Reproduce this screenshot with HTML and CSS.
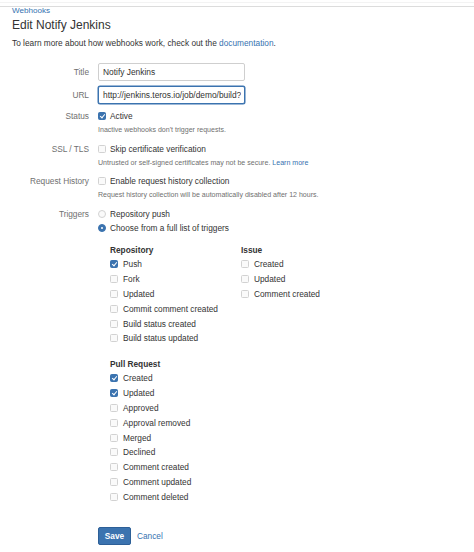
FILE: index.html
```html
<!DOCTYPE html>
<html lang="en">
<head>
<meta charset="utf-8">
<title>Edit Notify Jenkins</title>
<link rel="stylesheet" href="styles.css">
</head>
<body>
<div class="topbar"></div>
<div class="page">
  <a class="crumb" href="#">Webhooks</a>
  <h2 class="title">Edit Notify Jenkins</h2>
  <p class="intro">To learn more about how webhooks work, check out the <a href="#">documentation</a>.</p>

  <form class="form">
    <div class="row row-input">
      <label class="label">Title</label>
      <div class="field"><input class="text" type="text" value="Notify Jenkins"></div>
    </div>
    <div class="row row-input row-url">
      <label class="label">URL</label>
      <div class="field"><input class="text focus" type="text" value="http://jenkins.teros.io/job/demo/build?token=abc"></div>
    </div>

    <div class="row group">
      <label class="label">Status</label>
      <div class="field">
        <div class="check"><span class="box on"></span><span>Active</span></div>
        <div class="help">Inactive webhooks don't trigger requests.</div>
      </div>
    </div>

    <div class="row group">
      <label class="label">SSL / TLS</label>
      <div class="field">
        <div class="check"><span class="box"></span><span>Skip certificate verification</span></div>
        <div class="help">Untrusted or self-signed certificates may not be secure. <a href="#">Learn more</a></div>
      </div>
    </div>

    <div class="row group">
      <label class="label">Request History</label>
      <div class="field">
        <div class="check"><span class="box"></span><span>Enable request history collection</span></div>
        <div class="help">Request history collection will be automatically disabled after 12 hours.</div>
      </div>
    </div>

    <div class="row group-radio">
      <label class="label label-radio">Triggers</label>
      <div class="field">
        <div class="radio"><span class="dot"></span><span>Repository push</span></div>
        <div class="radio"><span class="dot on"></span><span>Choose from a full list of triggers</span></div>

        <div class="triggers">
          <div class="cols">
            <div class="col">
              <div class="th">Repository</div>
              <div class="item"><span class="box on"></span><span>Push</span></div>
              <div class="item"><span class="box"></span><span>Fork</span></div>
              <div class="item"><span class="box"></span><span>Updated</span></div>
              <div class="item"><span class="box"></span><span>Commit comment created</span></div>
              <div class="item"><span class="box"></span><span>Build status created</span></div>
              <div class="item"><span class="box"></span><span>Build status updated</span></div>
            </div>
            <div class="col">
              <div class="th">Issue</div>
              <div class="item"><span class="box"></span><span>Created</span></div>
              <div class="item"><span class="box"></span><span>Updated</span></div>
              <div class="item"><span class="box"></span><span>Comment created</span></div>
            </div>
          </div>
          <div class="col pr">
            <div class="th">Pull Request</div>
            <div class="item"><span class="box on"></span><span>Created</span></div>
            <div class="item"><span class="box on"></span><span>Updated</span></div>
            <div class="item"><span class="box"></span><span>Approved</span></div>
            <div class="item"><span class="box"></span><span>Approval removed</span></div>
            <div class="item"><span class="box"></span><span>Merged</span></div>
            <div class="item"><span class="box"></span><span>Declined</span></div>
            <div class="item"><span class="box"></span><span>Comment created</span></div>
            <div class="item"><span class="box"></span><span>Comment updated</span></div>
            <div class="item"><span class="box"></span><span>Comment deleted</span></div>
          </div>
        </div>
      </div>
    </div>

    <div class="row buttons">
      <div></div>
      <div class="field actions">
        <button class="save" type="button">Save</button>
        <a class="cancel" href="#">Cancel</a>
      </div>
    </div>
  </form>
</div>
</body>
</html>
```

FILE: styles.css
```css
* { box-sizing: border-box; }

html, body {
  margin: 0;
  padding: 0;
  background: #fff;
}

body {
  font-family: "Liberation Sans", Arial, Helvetica, sans-serif;
  font-size: 8.3px;
  color: #333;
}

a { color: #3572b0; text-decoration: none; }

.topbar {
  margin-top: 2px;
  height: 5px;
  border-top: 1px solid #f3f3f3;
  border-bottom: 1px solid #dcdcdc;
}

.page {
  padding: 0 12px;
}

.crumb {
  display: block;
  line-height: 8px;
  font-size: 8.1px;
}

.title {
  margin: 3px 0 0;
  font-size: 12px;
  line-height: 14px;
  font-weight: normal;
  color: #333;
}

.intro {
  margin: 6px 0 0;
  line-height: 11px;
}

.form {
  margin-top: 14px;
}

.row {
  display: grid;
  grid-template-columns: 77px 1fr;
  column-gap: 9px;
}

.label {
  text-align: right;
  color: #707070;
  line-height: 12px;
}

.row-input .label {
  line-height: 18px;
}

.row-url { margin-top: 5px; }

.text {
  display: block;
  width: 147px;
  height: 18px;
  padding: 0 3px 0 4px;
  margin: 0;
  border: 1px solid #cfcfcf;
  border-radius: 2px;
  font-family: inherit;
  font-size: 8.4px;
  color: #333;
  background: #fff;
  outline: none;
}

.text.focus {
  border-color: #3b73af;
  box-shadow: 0 0 0 0.5px #3b73af;
}

.group { margin-top: 6px; }
.group + .group { margin-top: 7.5px; }
.group-radio { margin-top: 7px; }

.check, .radio, .item {
  display: flex;
  align-items: center;
  gap: 4px;
  height: 12px;
}

.radio { height: 14px; }
.label-radio { line-height: 14px; }

.box {
  flex: none;
  width: 8px;
  height: 8px;
  border: 1px solid #d2d2d2;
  border-radius: 1.5px;
  background: #fafafa;
  position: relative;
}

.box.on {
  background: #3b73af;
  border-color: #3b73af;
}

.box.on::after {
  content: "";
  position: absolute;
  left: 2px;
  top: 0px;
  width: 2px;
  height: 4px;
  border: solid #fff;
  border-width: 0 1.2px 1.2px 0;
  transform: rotate(40deg);
}

.dot {
  flex: none;
  width: 8px;
  height: 8px;
  border: 1px solid #d2d2d2;
  border-radius: 50%;
  background: #fafafa;
  position: relative;
}

.dot.on {
  background: #3b73af;
  border-color: #3b73af;
}

.dot.on::after {
  content: "";
  position: absolute;
  left: 2px;
  top: 2px;
  width: 2px;
  height: 2px;
  border-radius: 50%;
  background: #fff;
}

.help {
  margin-top: 3px;
  font-size: 7.05px;
  line-height: 10px;
  color: #707070;
}

.triggers {
  margin-left: 12px;
  margin-top: 8px;
}

.cols {
  display: grid;
  grid-template-columns: 131px 1fr;
}

.th {
  font-weight: bold;
  line-height: 14px;
  color: #333;
}

.item {
  height: 14.8px;
  gap: 5px;
}

.pr { margin-top: 11.2px; }

.buttons { margin-top: 22.8px; }

.actions {
  display: flex;
  align-items: center;
  gap: 6px;
}

.save {
  width: 33px;
  height: 18px;
  padding: 0;
  border: 1px solid #2d5f97;
  border-radius: 2px;
  background: #3b73af;
  color: #fff;
  font-family: inherit;
  font-weight: bold;
  font-size: 8.3px;
}

.cancel {
  font-size: 8.3px;
}
```
